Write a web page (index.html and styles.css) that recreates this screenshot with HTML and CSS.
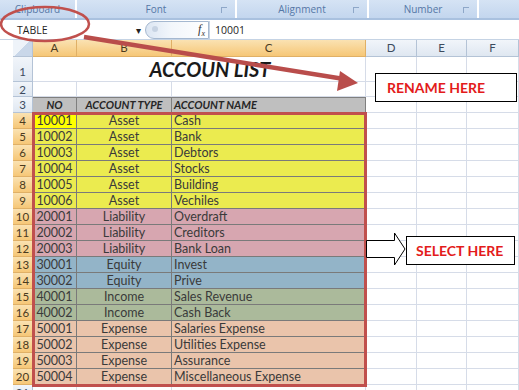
FILE: index.html
```html
<!DOCTYPE html>
<html lang="en">
<head>
  <meta charset="UTF-8" />
  <title>Account List</title>
  <link rel="stylesheet" href="styles.css">
</head>
<body>
<div id="ribbon">
  <div class="group g-clip"><span>Clipboard</span></div>
  <div class="group g-font"><span>Font</span><i class="launch"></i></div>
  <div class="group g-align"><span>Alignment</span><i class="launch"></i></div>
  <div class="group g-num"><span>Number</span><i class="launch"></i></div>
  <div class="group g-rest"></div>
</div>

<div id="formulabar">
  <div id="namebox"><span>TABLE</span><b class="drop">&#9662;</b></div>
  <div id="pill"><i class="knob"></i><span class="fx">f<sub>x</sub></span></div>
  <div id="input">10001</div>
</div>

<div id="sheet">
  <!-- column headers -->
  <div class="c corner"></div>
  <div class="c colh sel">A</div>
  <div class="c colh sel">B</div>
  <div class="c colh sel">C</div>
  <div class="c colh">D</div>
  <div class="c colh">E</div>
  <div class="c colh">F</div>

  <!-- row 1 -->
  <div class="c rowh tall">1</div>
  <div class="c title">ACCOUN LIST</div>
  <div class="c"></div><div class="c"></div><div class="c"></div>

  <!-- row 2 -->
  <div class="c rowh">2</div>
  <div class="c"></div><div class="c"></div><div class="c"></div>
  <div class="c"></div><div class="c"></div><div class="c"></div>

  <!-- row 3 -->
  <div class="c rowh">3</div>
  <div class="c hd mid">NO</div>
  <div class="c hd mid">ACCOUNT TYPE</div>
  <div class="c hd">ACCOUNT NAME</div>
  <div class="c"></div><div class="c"></div><div class="c"></div>

  <div class="c rowh sel">4</div>
  <div class="c d active mid">10001</div><div class="c d asset mid">Asset</div><div class="c d asset">Cash</div>
  <div class="c"></div><div class="c"></div><div class="c"></div>

  <div class="c rowh sel">5</div>
  <div class="c d asset mid">10002</div><div class="c d asset mid">Asset</div><div class="c d asset">Bank</div>
  <div class="c"></div><div class="c"></div><div class="c"></div>

  <div class="c rowh sel">6</div>
  <div class="c d asset mid">10003</div><div class="c d asset mid">Asset</div><div class="c d asset">Debtors</div>
  <div class="c"></div><div class="c"></div><div class="c"></div>

  <div class="c rowh sel">7</div>
  <div class="c d asset mid">10004</div><div class="c d asset mid">Asset</div><div class="c d asset">Stocks</div>
  <div class="c"></div><div class="c"></div><div class="c"></div>

  <div class="c rowh sel">8</div>
  <div class="c d asset mid">10005</div><div class="c d asset mid">Asset</div><div class="c d asset">Building</div>
  <div class="c"></div><div class="c"></div><div class="c"></div>

  <div class="c rowh sel">9</div>
  <div class="c d asset mid">10006</div><div class="c d asset mid">Asset</div><div class="c d asset">Vechiles</div>
  <div class="c"></div><div class="c"></div><div class="c"></div>

  <div class="c rowh sel">10</div>
  <div class="c d liab mid">20001</div><div class="c d liab mid">Liability</div><div class="c d liab">Overdraft</div>
  <div class="c"></div><div class="c"></div><div class="c"></div>

  <div class="c rowh sel">11</div>
  <div class="c d liab mid">20002</div><div class="c d liab mid">Liability</div><div class="c d liab">Creditors</div>
  <div class="c"></div><div class="c"></div><div class="c"></div>

  <div class="c rowh sel">12</div>
  <div class="c d liab mid">20003</div><div class="c d liab mid">Liability</div><div class="c d liab">Bank Loan</div>
  <div class="c"></div><div class="c"></div><div class="c"></div>

  <div class="c rowh sel">13</div>
  <div class="c d equity mid">30001</div><div class="c d equity mid">Equity</div><div class="c d equity">Invest</div>
  <div class="c"></div><div class="c"></div><div class="c"></div>

  <div class="c rowh sel">14</div>
  <div class="c d equity mid">30002</div><div class="c d equity mid">Equity</div><div class="c d equity">Prive</div>
  <div class="c"></div><div class="c"></div><div class="c"></div>

  <div class="c rowh sel">15</div>
  <div class="c d income mid">40001</div><div class="c d income mid">Income</div><div class="c d income">Sales Revenue</div>
  <div class="c"></div><div class="c"></div><div class="c"></div>

  <div class="c rowh sel">16</div>
  <div class="c d income mid">40002</div><div class="c d income mid">Income</div><div class="c d income">Cash Back</div>
  <div class="c"></div><div class="c"></div><div class="c"></div>

  <div class="c rowh sel">17</div>
  <div class="c d expense mid">50001</div><div class="c d expense mid">Expense</div><div class="c d expense">Salaries Expense</div>
  <div class="c"></div><div class="c"></div><div class="c"></div>

  <div class="c rowh sel">18</div>
  <div class="c d expense mid">50002</div><div class="c d expense mid">Expense</div><div class="c d expense">Utilities Expense</div>
  <div class="c"></div><div class="c"></div><div class="c"></div>

  <div class="c rowh sel">19</div>
  <div class="c d expense mid">50003</div><div class="c d expense mid">Expense</div><div class="c d expense">Assurance</div>
  <div class="c"></div><div class="c"></div><div class="c"></div>

  <div class="c rowh sel">20</div>
  <div class="c d expense mid">50004</div><div class="c d expense mid">Expense</div><div class="c d expense">Miscellaneous Expense</div>
  <div class="c"></div><div class="c"></div><div class="c"></div>

  <div class="c rowh">21</div>
  <div class="c"></div><div class="c"></div><div class="c"></div>
  <div class="c"></div><div class="c"></div><div class="c"></div>

  <div id="selection"></div>
</div>

<!-- annotations drawn over the sheet -->
<svg id="marks" width="519" height="390" viewBox="0 0 519 390">
  <ellipse cx="45" cy="24" rx="44" ry="17" fill="none" stroke="#c0504d" stroke-width="2.5"/>
  <line x1="84" y1="37" x2="344" y2="79" stroke="#b94d4b" stroke-width="4.5"/>
  <polygon points="340,71 358,83 337,91" fill="#b94d4b"/>
  <polygon points="366.5,240.5 394.5,240.5 394.5,233 405,249 394.5,265 394.5,257.5 366.5,257.5" fill="#fff" stroke="#000" stroke-width="1"/>
</svg>

<div class="callout rename">RENAME HERE</div>
<div class="callout select">SELECT HERE</div>
</body>
</html>
```

FILE: styles.css
```css
html, body {
  margin: 0;
  padding: 0;
  background: white;
  overflow: hidden;
}

body {
  position: relative;
  width: 519px;
  height: 390px;
  font-family: Lato, "Liberation Sans", sans-serif;
}

#ribbon {
  display: flex;
  height: 18px;
  border-bottom: 2px solid #a9c1df;
  overflow: hidden;
}

.group {
  position: relative;
  height: 18px;
  margin-right: 2px;
  background: linear-gradient(#d5e3f4, #c3d6ee);
  display: flex;
  align-items: flex-end;
  justify-content: center;
  font-family: "Open Sans", "DejaVu Sans", sans-serif;
  font-size: 10px;
  color: #5577a6;
  line-height: 14px;
}
.group span { margin-bottom: 2px; }
.g-clip { width: 75px; }
.g-font { width: 158px; }
.g-align { width: 130px; }
.g-num { width: 108px; }
.g-rest { flex: 1; margin-right: 0; }

.launch {
  position: absolute;
  right: 8px;
  bottom: 5px;
  width: 5px;
  height: 5px;
  border: 1px solid #8ea7c8;
  border-width: 1px 0 0 1px;
}

#formulabar {
  display: flex;
  height: 18px;
  margin-top: 1px;
  border-bottom: 1px solid #c5d3e4;
  align-items: stretch;
  font-size: 11px;
}

#namebox {
  width: 124px;
  margin-left: 13px;
  display: flex;
  align-items: center;
  justify-content: space-between;
  padding: 0 4px;
  font-family: "Open Sans", "DejaVu Sans", sans-serif;
  font-size: 10.5px;
  color: #1e1e1e;
  background: white;
}
.drop { font-size: 10px; color: #222; }

#pill {
  width: 64px;
  display: flex;
  align-items: center;
  justify-content: space-between;
  padding: 0 3px 0 6px;
  box-sizing: border-box;
  border: 1px solid #a5b8d0;
  border-radius: 9px 0 0 9px;
  background: linear-gradient(90deg, #dce6f3, #f2f6fb 40%, #ffffff);
}
.knob {
  width: 6px;
  height: 6px;
  border-radius: 50%;
  background: #c7d3e3;
  margin-bottom: 3px;
}
.fx {
  font-family: "Liberation Serif", serif;
  font-style: italic;
  font-size: 12px;
  color: #333;
}
.fx sub { font-size: 8px; }

#input {
  flex: 1;
  padding-left: 5px;
  display: flex;
  align-items: center;
  border-left: 1px solid #c5d3e4;
  font-family: "Open Sans", "DejaVu Sans", sans-serif;
  font-size: 10.5px;
  color: #1e1e1e;
}

#sheet {
  position: relative;
  margin-left: 13px;
  display: grid;
  grid-template-columns: 20px 44px 95px 194px 51px 50px 52px;
  grid-template-rows: 17px 25px 15px 16px repeat(17, 16px) 16px;
}

.c {
  box-sizing: border-box;
  border-right: 1px solid #d6dce8;
  border-bottom: 1px solid #d6dce8;
  font-size: 12.5px;
  line-height: 15px;
  padding: 0 2px;
  white-space: nowrap;
  overflow: hidden;
  color: #3a3a3a;
}

.corner {
  background: linear-gradient(135deg, #eef3f9 50%, #c9d7e9 50%);
  border-color: #b4c3d6;
}

.colh, .rowh {
  background: linear-gradient(#f1f5fa, #dfe7f1);
  border-color: #b4c3d6;
  text-align: center;
  color: #3c4a5e;
  font-size: 11.5px;
}
.colh { line-height: 16px; }
.colh.sel, .rowh.sel {
  background: linear-gradient(#fae2b2, #f6c777);
  border-color: #e0b066;
  color: #4a3a1e;
}
.rowh { padding: 0; }
.rowh.tall { line-height: 29px; }

.title {
  grid-column: span 3;
  display: flex;
  align-items: flex-end;
  justify-content: center;
  padding-left: 24px;
  font-size: 20px;
  line-height: 24px;
  font-weight: bold;
  font-style: italic;
  color: #1a1a1a;
}

.hd {
  background: #bfbfbf;
  border-color: #7f7f7f;
  border-top: 1px solid #7f7f7f;
  font-weight: bold;
  font-style: italic;
  font-size: 11px;
  line-height: 14px;
  color: #262626;
}

.mid { text-align: center; }

.d { border-color: #7a7a7a; }
.asset { background: #ebeb4f; }
.active { background: #ffff00; }
.liab { background: #d7a6b0; }
.equity { background: #93b4c8; }
.income { background: #abba9b; }
.expense { background: #eac4ab; }

#selection {
  position: absolute;
  left: 19px;
  top: 72px;
  width: 335px;
  height: 275px;
  border: 3px solid #c0504d;
  box-sizing: border-box;
  pointer-events: none;
}

#marks {
  position: absolute;
  top: 0;
  left: 0;
  pointer-events: none;
}

.callout {
  position: absolute;
  box-sizing: border-box;
  border: 1px solid #000;
  background: white;
  color: #e31b1b;
  font-family: Lato, "Liberation Sans", sans-serif;
  font-weight: bold;
  font-size: 14px;
  display: flex;
  align-items: center;
  padding-left: 11px;
}
.rename { left: 375px; top: 73px; width: 142px; height: 29px; }
.select { left: 406px; top: 236px; width: 109px; height: 29px; padding-left: 9px; }
```
